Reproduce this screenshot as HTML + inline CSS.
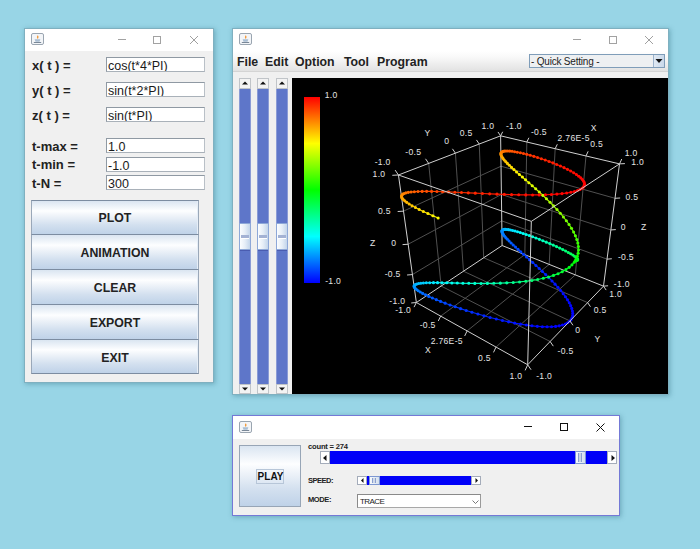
<!DOCTYPE html>
<html><head><meta charset="utf-8">
<style>
*{margin:0;padding:0;box-sizing:border-box}
html,body{width:700px;height:549px;overflow:hidden;background:#98d5e6;font-family:"Liberation Sans",sans-serif}
.abs{position:absolute}
.win{position:absolute;background:#f0f0f0;border:1px solid #7fb0c0;box-shadow:1px 1px 5px rgba(20,80,100,.35)}
.title{position:absolute;left:0;top:0;right:0;background:#fff}
.ico{position:absolute;width:12px;height:12px}
.lbl{position:absolute;font-weight:bold;font-size:13px;color:#222;white-space:nowrap;line-height:1}
.fld{position:absolute;background:#fff;border:1px solid #8f99a3;border-bottom-color:#a9b1b9;border-right-color:#b9c0c7;overflow:hidden}
.fld span{position:absolute;left:1px;font-size:12.5px;color:#1a1a1a;white-space:nowrap;line-height:1}
.btn{position:absolute;left:31px;width:168px;border:1px solid #7c8ca1;border-left-color:#9aa8b9;border-right-color:#9aa8b9;background:linear-gradient(#dae5f1 0%,#fdfeff 30%,#f1f5fa 42%,#d3e0ef 72%,#bfd2e8 100%);box-shadow:inset -1px 0 #e6eef7}
.btn span{position:absolute;left:0;right:0;text-align:center;font-weight:bold;font-size:12.3px;color:#222;line-height:1}
.ctl{position:absolute}
.sb{position:absolute;width:12px;background:#5e76c9}
.sbbtn{position:absolute;left:0;width:12px;height:10px;background:#f3f3f3;border:1px solid #c0c4c8}
.menu{position:absolute;top:56px;font-weight:bold;font-size:12.3px;color:#222;line-height:1}
svg text{font-family:"Liberation Sans",sans-serif;font-size:8.6px;letter-spacing:.3px;fill:#e4e4e4}
</style></head><body>

<!-- LEFT WINDOW -->
<div class="win" style="left:24px;top:28px;width:190px;height:355px">
  <div class="title" style="height:22px"></div>
</div>
<svg class="abs" style="left:31px;top:33px" width="13" height="12" viewBox="0 0 13 12">
  <rect x=".5" y=".5" width="12" height="11" rx="1.5" fill="#f3f5f8" stroke="#9aa5b0"/>
  <path d="M6.6 2.3c1.3 1 1.2 2.4.1 3.6c-1.1-.9-1-2.3-.1-3.6z" fill="#f39a3a"/>
  <path d="M3.6 6.3h5.8l-.9 2.4H4.5z" fill="#a9bdd2"/>
  <path d="M2.8 9.5h7.4" stroke="#7a8898" stroke-width="1"/>
</svg>
<div class="abs" style="left:118px;top:39px;width:8px;height:1px;background:#a2a2a2"></div>
<div class="abs" style="left:153px;top:36px;width:8px;height:8px;border:1px solid #a2a2a2"></div>
<svg class="abs" style="left:190px;top:36px" width="8" height="8" viewBox="0 0 8 8"><path d="M0 0L8 8M8 0L0 8" stroke="#a0a0a0" stroke-width="1"/></svg>

<div class="lbl" style="left:32px;top:58.5px">x( t ) =</div>
<div class="lbl" style="left:32px;top:84px">y( t ) =</div>
<div class="lbl" style="left:32px;top:109px">z( t ) =</div>
<div class="lbl" style="left:32px;top:140px">t-max =</div>
<div class="lbl" style="left:32px;top:158px">t-min =</div>
<div class="lbl" style="left:32px;top:176.5px">t-N =</div>

<div class="fld" style="left:106px;top:57px;width:99px;height:15px"><span style="top:2px">cos(t*4*PI)</span></div>
<div class="fld" style="left:106px;top:82px;width:99px;height:15px"><span style="top:2px">sin(t*2*PI)</span></div>
<div class="fld" style="left:106px;top:107px;width:99px;height:15px"><span style="top:2px">sin(t*PI)</span></div>
<div class="fld" style="left:106px;top:138px;width:99px;height:15px"><span style="top:1.5px">1.0</span></div>
<div class="fld" style="left:106px;top:157px;width:99px;height:15px"><span style="top:1.5px">-1.0</span></div>
<div class="fld" style="left:106px;top:175px;width:99px;height:15px"><span style="top:1.5px">300</span></div>

<div class="btn" style="top:200px;height:35px"><span style="top:11px">PLOT</span></div>
<div class="btn" style="top:234px;height:36px"><span style="top:12px">ANIMATION</span></div>
<div class="btn" style="top:269px;height:36px"><span style="top:12px">CLEAR</span></div>
<div class="btn" style="top:304px;height:36px"><span style="top:12px">EXPORT</span></div>
<div class="btn" style="top:339px;height:35px"><span style="top:12px">EXIT</span></div>

<!-- RIGHT WINDOW -->
<div class="win" style="left:232px;top:28px;width:437px;height:367px">
  <div class="title" style="height:22px"></div>
  <div class="abs" style="left:0;top:22px;right:0;height:20px;background:linear-gradient(#ffffff,#f9f9f9 30%,#e2e2e2)"></div>
  <div class="abs" style="left:0;top:42px;right:0;height:1px;background:#d4d4d4"></div>
  <div class="abs" style="left:59px;top:49px;width:376px;height:316px;background:#000"></div>
</div>
<svg class="abs" style="left:239px;top:33px" width="13" height="12" viewBox="0 0 13 12">
  <rect x=".5" y=".5" width="12" height="11" rx="1.5" fill="#f3f5f8" stroke="#9aa5b0"/>
  <path d="M6.6 2.3c1.3 1 1.2 2.4.1 3.6c-1.1-.9-1-2.3-.1-3.6z" fill="#f39a3a"/>
  <path d="M3.6 6.3h5.8l-.9 2.4H4.5z" fill="#a9bdd2"/>
  <path d="M2.8 9.5h7.4" stroke="#7a8898" stroke-width="1"/>
</svg>
<div class="abs" style="left:573px;top:39px;width:8px;height:1px;background:#a2a2a2"></div>
<div class="abs" style="left:609px;top:36px;width:8px;height:8px;border:1px solid #a2a2a2"></div>
<svg class="abs" style="left:645px;top:36px" width="8" height="8" viewBox="0 0 8 8"><path d="M0 0L8 8M8 0L0 8" stroke="#a0a0a0" stroke-width="1"/></svg>

<div class="menu" style="left:237px">File</div>
<div class="menu" style="left:265px">Edit</div>
<div class="menu" style="left:295px">Option</div>
<div class="menu" style="left:344px">Tool</div>
<div class="menu" style="left:377px">Program</div>

<div class="abs" style="left:529px;top:54px;width:136px;height:14px;background:#eef0f2;border:1px solid #7f9db9;overflow:hidden">
  <span class="abs" style="left:1px;top:2.2px;font-size:10px;letter-spacing:-.2px;color:#222;line-height:1;white-space:nowrap">- Quick Setting -</span>
  <div class="abs" style="left:123px;top:0;width:11px;height:12px;background:linear-gradient(90deg,#dfe8f2,#c9d8ea);border-left:1px solid #9db3cc"></div>
  <svg class="abs" style="left:125px;top:3px" width="8" height="6" viewBox="0 0 8 6"><path d="M.5 1h7L4 5z" fill="#111"/></svg>
</div>

<!-- scrollbars -->
<div class="abs" style="left:239px;top:78px;width:12px;height:316px;background:#5e76c9;border-left:1px solid #8a9bd6;border-right:1px solid #8a9bd6">
  <div class="sbbtn" style="left:-1px;top:0;height:11px"></div>
  <div class="sbbtn" style="left:-1px;top:306px;height:10px"></div>
  <svg class="abs" style="left:2px;top:3px" width="6" height="4" viewBox="0 0 6 4"><path d="M0 3.5L3 .5L6 3.5z" fill="#111"/></svg>
  <svg class="abs" style="left:2px;top:309px" width="6" height="4" viewBox="0 0 6 4"><path d="M0 .5L3 3.5L6 .5z" fill="#111"/></svg>
  <div class="abs" style="left:-1px;top:145px;width:12px;height:27px;border:1px solid #8ea8d8;background:linear-gradient(90deg,#fbfdff,#e6eef7 50%,#c3d5eb)"></div>
  <div class="abs" style="left:0px;top:172px;width:10px;height:1px;background:#4a5cb0"></div>
  <div class="abs" style="left:1px;top:156.5px;width:8px;height:3px;background:#a3b2d4"></div>
  <div class="abs" style="left:1px;top:159.5px;width:8px;height:1px;background:#fff"></div>
</div>
<div class="abs" style="left:257px;top:78px;width:12px;height:316px;background:#5e76c9;border-left:1px solid #8a9bd6;border-right:1px solid #8a9bd6">
  <div class="sbbtn" style="left:-1px;top:0;height:11px"></div>
  <div class="sbbtn" style="left:-1px;top:306px;height:10px"></div>
  <svg class="abs" style="left:2px;top:3px" width="6" height="4" viewBox="0 0 6 4"><path d="M0 3.5L3 .5L6 3.5z" fill="#111"/></svg>
  <svg class="abs" style="left:2px;top:309px" width="6" height="4" viewBox="0 0 6 4"><path d="M0 .5L3 3.5L6 .5z" fill="#111"/></svg>
  <div class="abs" style="left:-1px;top:145px;width:12px;height:27px;border:1px solid #8ea8d8;background:linear-gradient(90deg,#fbfdff,#e6eef7 50%,#c3d5eb)"></div>
  <div class="abs" style="left:0px;top:172px;width:10px;height:1px;background:#4a5cb0"></div>
  <div class="abs" style="left:1px;top:156.5px;width:8px;height:3px;background:#a3b2d4"></div>
  <div class="abs" style="left:1px;top:159.5px;width:8px;height:1px;background:#fff"></div>
</div>
<div class="abs" style="left:276px;top:78px;width:12px;height:316px;background:#5e76c9;border-left:1px solid #8a9bd6;border-right:1px solid #8a9bd6">
  <div class="sbbtn" style="left:-1px;top:0;height:11px"></div>
  <div class="sbbtn" style="left:-1px;top:306px;height:10px"></div>
  <svg class="abs" style="left:2px;top:3px" width="6" height="4" viewBox="0 0 6 4"><path d="M0 3.5L3 .5L6 3.5z" fill="#111"/></svg>
  <svg class="abs" style="left:2px;top:309px" width="6" height="4" viewBox="0 0 6 4"><path d="M0 .5L3 3.5L6 .5z" fill="#111"/></svg>
  <div class="abs" style="left:-1px;top:145px;width:12px;height:27px;border:1px solid #8ea8d8;background:linear-gradient(90deg,#fbfdff,#e6eef7 50%,#c3d5eb)"></div>
  <div class="abs" style="left:0px;top:172px;width:10px;height:1px;background:#4a5cb0"></div>
  <div class="abs" style="left:1px;top:156.5px;width:8px;height:3px;background:#a3b2d4"></div>
  <div class="abs" style="left:1px;top:159.5px;width:8px;height:1px;background:#fff"></div>
</div>
<!-- 3D canvas -->
<svg class="abs" style="left:292px;top:78px" width="376" height="316" viewBox="0 0 376 316">
  <defs><linearGradient id="cb" x1="0" y1="0" x2="0" y2="1"><stop offset="0.0000" stop-color="#ff0000"/><stop offset="0.0833" stop-color="#ff5500"/><stop offset="0.1667" stop-color="#ffaa00"/><stop offset="0.2500" stop-color="#ffff00"/><stop offset="0.3333" stop-color="#aaff00"/><stop offset="0.4167" stop-color="#55ff00"/><stop offset="0.5000" stop-color="#00ff00"/><stop offset="0.5833" stop-color="#00ff55"/><stop offset="0.6667" stop-color="#00ffaa"/><stop offset="0.7500" stop-color="#00ffff"/><stop offset="0.8333" stop-color="#00aaff"/><stop offset="0.9167" stop-color="#0055ff"/><stop offset="1.0000" stop-color="#0000ff"/></linearGradient></defs>
  <rect x="12" y="19" width="16" height="186" fill="url(#cb)"/>
<line x1="149.13" y1="208.06" x2="136.67" y2="85.41" stroke="#505050" stroke-width="1.0"/>
<line x1="120.43" y1="196.57" x2="209.77" y2="142.86" stroke="#505050" stroke-width="1.0"/>
<line x1="171.46" y1="193.22" x2="163.41" y2="75.16" stroke="#505050" stroke-width="1.0"/>
<line x1="116.17" y1="166.22" x2="209.41" y2="116.48" stroke="#505050" stroke-width="1.0"/>
<line x1="191.69" y1="179.77" x2="187.25" y2="66.03" stroke="#505050" stroke-width="1.0"/>
<line x1="111.53" y1="133.15" x2="209.03" y2="88.21" stroke="#505050" stroke-width="1.0"/>
<line x1="232.84" y1="176.65" x2="234.82" y2="64.02" stroke="#505050" stroke-width="1.0"/>
<line x1="209.77" y1="142.86" x2="315.03" y2="181.15" stroke="#505050" stroke-width="1.0"/>
<line x1="257.19" y1="186.41" x2="263.17" y2="70.70" stroke="#505050" stroke-width="1.0"/>
<line x1="209.41" y1="116.48" x2="318.86" y2="151.95" stroke="#505050" stroke-width="1.0"/>
<line x1="283.34" y1="196.89" x2="293.97" y2="77.97" stroke="#505050" stroke-width="1.0"/>
<line x1="209.03" y1="88.21" x2="323.01" y2="120.31" stroke="#505050" stroke-width="1.0"/>
<line x1="148.67" y1="238.13" x2="232.84" y2="176.65" stroke="#505050" stroke-width="1.0"/>
<line x1="149.13" y1="208.06" x2="258.13" y2="263.51" stroke="#505050" stroke-width="1.0"/>
<line x1="175.13" y1="252.92" x2="257.19" y2="186.41" stroke="#505050" stroke-width="1.0"/>
<line x1="171.46" y1="193.22" x2="277.97" y2="242.93" stroke="#505050" stroke-width="1.0"/>
<line x1="204.02" y1="269.07" x2="283.34" y2="196.89" stroke="#505050" stroke-width="1.0"/>
<line x1="191.69" y1="179.77" x2="295.64" y2="224.60" stroke="#505050" stroke-width="1.0"/>
<line x1="124.36" y1="224.53" x2="210.10" y2="167.53" stroke="#cfcfcf" stroke-width="1.0"/>
<line x1="210.10" y1="167.53" x2="311.49" y2="208.17" stroke="#cfcfcf" stroke-width="1.0"/>
<line x1="210.10" y1="167.53" x2="208.62" y2="57.84" stroke="#cfcfcf" stroke-width="1.0"/>
<line x1="106.45" y1="96.99" x2="208.62" y2="57.84" stroke="#cfcfcf" stroke-width="1.0"/>
<line x1="208.62" y1="57.84" x2="327.53" y2="85.88" stroke="#cfcfcf" stroke-width="1.0"/>
<line x1="106.45" y1="96.99" x2="124.36" y2="224.53" stroke="#cfcfcf" stroke-width="1.0"/>
<line x1="327.53" y1="85.88" x2="311.49" y2="208.17" stroke="#cfcfcf" stroke-width="1.0"/>
<line x1="283.23" y1="182.79" x2="284.54" y2="182.62" stroke="#00ff05" stroke-width="1.15"/>
<line x1="284.54" y1="182.62" x2="285.36" y2="182.27" stroke="#00ff10" stroke-width="1.15"/>
<line x1="285.36" y1="182.27" x2="285.69" y2="181.75" stroke="#00ff1b" stroke-width="1.15"/>
<line x1="285.69" y1="181.75" x2="285.55" y2="181.08" stroke="#00ff25" stroke-width="1.15"/>
<line x1="285.55" y1="181.08" x2="284.96" y2="180.26" stroke="#00ff30" stroke-width="1.15"/>
<line x1="284.96" y1="180.26" x2="283.95" y2="179.31" stroke="#00ff3b" stroke-width="1.15"/>
<line x1="283.95" y1="179.31" x2="282.55" y2="178.24" stroke="#00ff45" stroke-width="1.15"/>
<line x1="282.55" y1="178.24" x2="280.79" y2="177.06" stroke="#00ff50" stroke-width="1.15"/>
<line x1="280.79" y1="177.06" x2="278.69" y2="175.79" stroke="#00ff5b" stroke-width="1.15"/>
<line x1="278.69" y1="175.79" x2="276.30" y2="174.45" stroke="#00ff65" stroke-width="1.15"/>
<line x1="276.30" y1="174.45" x2="273.65" y2="173.04" stroke="#00ff70" stroke-width="1.15"/>
<line x1="273.65" y1="173.04" x2="270.78" y2="171.59" stroke="#00ff7a" stroke-width="1.15"/>
<line x1="270.78" y1="171.59" x2="267.72" y2="170.11" stroke="#00ff84" stroke-width="1.15"/>
<line x1="267.72" y1="170.11" x2="264.51" y2="168.61" stroke="#00ff8f" stroke-width="1.15"/>
<line x1="264.51" y1="168.61" x2="261.19" y2="167.11" stroke="#00ff99" stroke-width="1.15"/>
<line x1="261.19" y1="167.11" x2="257.78" y2="165.62" stroke="#00ffa3" stroke-width="1.15"/>
<line x1="257.78" y1="165.62" x2="254.32" y2="164.15" stroke="#00ffad" stroke-width="1.15"/>
<line x1="254.32" y1="164.15" x2="250.84" y2="162.72" stroke="#00ffb7" stroke-width="1.15"/>
<line x1="250.84" y1="162.72" x2="247.38" y2="161.33" stroke="#00ffc1" stroke-width="1.15"/>
<line x1="247.38" y1="161.33" x2="243.95" y2="160.00" stroke="#00ffcb" stroke-width="1.15"/>
<line x1="243.95" y1="160.00" x2="240.59" y2="158.74" stroke="#00ffd5" stroke-width="1.15"/>
<line x1="240.59" y1="158.74" x2="237.31" y2="157.55" stroke="#00ffdf" stroke-width="1.15"/>
<line x1="237.31" y1="157.55" x2="234.15" y2="156.45" stroke="#00ffe8" stroke-width="1.15"/>
<line x1="234.15" y1="156.45" x2="231.12" y2="155.44" stroke="#00fff2" stroke-width="1.15"/>
<line x1="231.12" y1="155.44" x2="228.24" y2="154.53" stroke="#00fffb" stroke-width="1.15"/>
<line x1="228.24" y1="154.53" x2="225.53" y2="153.72" stroke="#00faff" stroke-width="1.15"/>
<line x1="225.53" y1="153.72" x2="223.00" y2="153.02" stroke="#00f0ff" stroke-width="1.15"/>
<line x1="223.00" y1="153.02" x2="220.66" y2="152.44" stroke="#00e7ff" stroke-width="1.15"/>
<line x1="220.66" y1="152.44" x2="218.53" y2="151.97" stroke="#00dfff" stroke-width="1.15"/>
<line x1="218.53" y1="151.97" x2="216.62" y2="151.64" stroke="#00d6ff" stroke-width="1.15"/>
<line x1="216.62" y1="151.64" x2="214.94" y2="151.43" stroke="#00cdff" stroke-width="1.15"/>
<line x1="214.94" y1="151.43" x2="213.49" y2="151.35" stroke="#00c5ff" stroke-width="1.15"/>
<line x1="213.49" y1="151.35" x2="212.28" y2="151.40" stroke="#00bcff" stroke-width="1.15"/>
<line x1="212.28" y1="151.40" x2="211.31" y2="151.60" stroke="#00b4ff" stroke-width="1.15"/>
<line x1="211.31" y1="151.60" x2="210.60" y2="151.93" stroke="#00acff" stroke-width="1.15"/>
<line x1="210.60" y1="151.93" x2="210.13" y2="152.40" stroke="#00a4ff" stroke-width="1.15"/>
<line x1="210.13" y1="152.40" x2="209.92" y2="153.01" stroke="#009cff" stroke-width="1.15"/>
<line x1="209.92" y1="153.01" x2="209.96" y2="153.76" stroke="#0094ff" stroke-width="1.15"/>
<line x1="209.96" y1="153.76" x2="210.25" y2="154.66" stroke="#008dff" stroke-width="1.15"/>
<line x1="210.25" y1="154.66" x2="210.80" y2="155.71" stroke="#0086ff" stroke-width="1.15"/>
<line x1="210.80" y1="155.71" x2="211.59" y2="156.89" stroke="#007fff" stroke-width="1.15"/>
<line x1="211.59" y1="156.89" x2="212.62" y2="158.22" stroke="#0078ff" stroke-width="1.15"/>
<line x1="212.62" y1="158.22" x2="213.89" y2="159.69" stroke="#0071ff" stroke-width="1.15"/>
<line x1="213.89" y1="159.69" x2="215.40" y2="161.30" stroke="#006aff" stroke-width="1.15"/>
<line x1="215.40" y1="161.30" x2="217.12" y2="163.05" stroke="#0064ff" stroke-width="1.15"/>
<line x1="217.12" y1="163.05" x2="219.06" y2="164.94" stroke="#005dff" stroke-width="1.15"/>
<line x1="219.06" y1="164.94" x2="221.20" y2="166.97" stroke="#0057ff" stroke-width="1.15"/>
<line x1="221.20" y1="166.97" x2="223.54" y2="169.12" stroke="#0051ff" stroke-width="1.15"/>
<line x1="223.54" y1="169.12" x2="226.05" y2="171.40" stroke="#004cff" stroke-width="1.15"/>
<line x1="226.05" y1="171.40" x2="228.72" y2="173.80" stroke="#0046ff" stroke-width="1.15"/>
<line x1="228.72" y1="173.80" x2="231.54" y2="176.32" stroke="#0041ff" stroke-width="1.15"/>
<line x1="231.54" y1="176.32" x2="234.49" y2="178.95" stroke="#003cff" stroke-width="1.15"/>
<line x1="234.49" y1="178.95" x2="237.55" y2="181.69" stroke="#0037ff" stroke-width="1.15"/>
<line x1="237.55" y1="181.69" x2="240.69" y2="184.52" stroke="#0032ff" stroke-width="1.15"/>
<line x1="240.69" y1="184.52" x2="243.90" y2="187.44" stroke="#002eff" stroke-width="1.15"/>
<line x1="243.90" y1="187.44" x2="247.15" y2="190.43" stroke="#0029ff" stroke-width="1.15"/>
<line x1="247.15" y1="190.43" x2="250.41" y2="193.49" stroke="#0025ff" stroke-width="1.15"/>
<line x1="250.41" y1="193.49" x2="253.66" y2="196.61" stroke="#0021ff" stroke-width="1.15"/>
<line x1="253.66" y1="196.61" x2="256.87" y2="199.77" stroke="#001dff" stroke-width="1.15"/>
<line x1="256.87" y1="199.77" x2="260.01" y2="202.96" stroke="#001aff" stroke-width="1.15"/>
<line x1="260.01" y1="202.96" x2="263.04" y2="206.16" stroke="#0017ff" stroke-width="1.15"/>
<line x1="263.04" y1="206.16" x2="265.94" y2="209.37" stroke="#0014ff" stroke-width="1.15"/>
<line x1="265.94" y1="209.37" x2="268.67" y2="212.56" stroke="#0011ff" stroke-width="1.15"/>
<line x1="268.67" y1="212.56" x2="271.20" y2="215.71" stroke="#000eff" stroke-width="1.15"/>
<line x1="271.20" y1="215.71" x2="273.50" y2="218.81" stroke="#000cff" stroke-width="1.15"/>
<line x1="273.50" y1="218.81" x2="275.53" y2="221.85" stroke="#000aff" stroke-width="1.15"/>
<line x1="275.53" y1="221.85" x2="277.27" y2="224.80" stroke="#0008ff" stroke-width="1.15"/>
<line x1="277.27" y1="224.80" x2="278.68" y2="227.65" stroke="#0006ff" stroke-width="1.15"/>
<line x1="278.68" y1="227.65" x2="279.75" y2="230.38" stroke="#0004ff" stroke-width="1.15"/>
<line x1="279.75" y1="230.38" x2="280.43" y2="232.97" stroke="#0003ff" stroke-width="1.15"/>
<line x1="280.43" y1="232.97" x2="280.72" y2="235.41" stroke="#0002ff" stroke-width="1.15"/>
<line x1="280.72" y1="235.41" x2="280.59" y2="237.68" stroke="#0001ff" stroke-width="1.15"/>
<line x1="280.59" y1="237.68" x2="280.03" y2="239.76" stroke="#0001ff" stroke-width="1.15"/>
<line x1="280.03" y1="239.76" x2="279.02" y2="241.65" stroke="#0000ff" stroke-width="1.15"/>
<line x1="279.02" y1="241.65" x2="277.56" y2="243.33" stroke="#0000ff" stroke-width="1.15"/>
<line x1="277.56" y1="243.33" x2="275.65" y2="244.80" stroke="#0000ff" stroke-width="1.15"/>
<line x1="275.65" y1="244.80" x2="273.29" y2="246.04" stroke="#0000ff" stroke-width="1.15"/>
<line x1="273.29" y1="246.04" x2="270.48" y2="247.06" stroke="#0001ff" stroke-width="1.15"/>
<line x1="270.48" y1="247.06" x2="267.24" y2="247.84" stroke="#0002ff" stroke-width="1.15"/>
<line x1="267.24" y1="247.84" x2="263.59" y2="248.39" stroke="#0003ff" stroke-width="1.15"/>
<line x1="263.59" y1="248.39" x2="259.54" y2="248.72" stroke="#0004ff" stroke-width="1.15"/>
<line x1="259.54" y1="248.72" x2="255.12" y2="248.81" stroke="#0005ff" stroke-width="1.15"/>
<line x1="255.12" y1="248.81" x2="250.36" y2="248.69" stroke="#0007ff" stroke-width="1.15"/>
<line x1="250.36" y1="248.69" x2="245.29" y2="248.35" stroke="#0009ff" stroke-width="1.15"/>
<line x1="245.29" y1="248.35" x2="239.95" y2="247.81" stroke="#000bff" stroke-width="1.15"/>
<line x1="239.95" y1="247.81" x2="234.37" y2="247.07" stroke="#000dff" stroke-width="1.15"/>
<line x1="234.37" y1="247.07" x2="228.59" y2="246.16" stroke="#000fff" stroke-width="1.15"/>
<line x1="228.59" y1="246.16" x2="222.65" y2="245.09" stroke="#0012ff" stroke-width="1.15"/>
<line x1="222.65" y1="245.09" x2="216.59" y2="243.86" stroke="#0015ff" stroke-width="1.15"/>
<line x1="216.59" y1="243.86" x2="210.45" y2="242.50" stroke="#0018ff" stroke-width="1.15"/>
<line x1="210.45" y1="242.50" x2="204.28" y2="241.03" stroke="#001cff" stroke-width="1.15"/>
<line x1="204.28" y1="241.03" x2="198.10" y2="239.45" stroke="#001fff" stroke-width="1.15"/>
<line x1="198.10" y1="239.45" x2="191.97" y2="237.79" stroke="#0023ff" stroke-width="1.15"/>
<line x1="191.97" y1="237.79" x2="185.93" y2="236.07" stroke="#0027ff" stroke-width="1.15"/>
<line x1="185.93" y1="236.07" x2="179.99" y2="234.29" stroke="#002bff" stroke-width="1.15"/>
<line x1="179.99" y1="234.29" x2="174.21" y2="232.48" stroke="#0030ff" stroke-width="1.15"/>
<line x1="174.21" y1="232.48" x2="168.61" y2="230.65" stroke="#0034ff" stroke-width="1.15"/>
<line x1="168.61" y1="230.65" x2="163.22" y2="228.81" stroke="#0039ff" stroke-width="1.15"/>
<line x1="163.22" y1="228.81" x2="158.07" y2="226.98" stroke="#003eff" stroke-width="1.15"/>
<line x1="158.07" y1="226.98" x2="153.19" y2="225.17" stroke="#0043ff" stroke-width="1.15"/>
<line x1="153.19" y1="225.17" x2="148.60" y2="223.40" stroke="#0049ff" stroke-width="1.15"/>
<line x1="148.60" y1="223.40" x2="144.33" y2="221.67" stroke="#004fff" stroke-width="1.15"/>
<line x1="144.33" y1="221.67" x2="140.38" y2="220.00" stroke="#0054ff" stroke-width="1.15"/>
<line x1="140.38" y1="220.00" x2="136.79" y2="218.39" stroke="#005aff" stroke-width="1.15"/>
<line x1="136.79" y1="218.39" x2="133.56" y2="216.85" stroke="#0060ff" stroke-width="1.15"/>
<line x1="133.56" y1="216.85" x2="130.71" y2="215.39" stroke="#0067ff" stroke-width="1.15"/>
<line x1="130.71" y1="215.39" x2="128.25" y2="214.01" stroke="#006dff" stroke-width="1.15"/>
<line x1="128.25" y1="214.01" x2="126.19" y2="212.72" stroke="#0074ff" stroke-width="1.15"/>
<line x1="126.19" y1="212.72" x2="124.54" y2="211.53" stroke="#007bff" stroke-width="1.15"/>
<line x1="124.54" y1="211.53" x2="123.31" y2="210.43" stroke="#0082ff" stroke-width="1.15"/>
<line x1="123.31" y1="210.43" x2="122.50" y2="209.43" stroke="#0089ff" stroke-width="1.15"/>
<line x1="122.50" y1="209.43" x2="122.11" y2="208.53" stroke="#0091ff" stroke-width="1.15"/>
<line x1="122.11" y1="208.53" x2="122.16" y2="207.74" stroke="#0098ff" stroke-width="1.15"/>
<line x1="122.16" y1="207.74" x2="122.63" y2="207.04" stroke="#00a0ff" stroke-width="1.15"/>
<line x1="122.63" y1="207.04" x2="123.53" y2="206.43" stroke="#00a8ff" stroke-width="1.15"/>
<line x1="123.53" y1="206.43" x2="124.86" y2="205.93" stroke="#00b0ff" stroke-width="1.15"/>
<line x1="124.86" y1="205.93" x2="126.61" y2="205.51" stroke="#00b8ff" stroke-width="1.15"/>
<line x1="126.61" y1="205.51" x2="128.77" y2="205.19" stroke="#00c0ff" stroke-width="1.15"/>
<line x1="128.77" y1="205.19" x2="131.35" y2="204.94" stroke="#00c9ff" stroke-width="1.15"/>
<line x1="131.35" y1="204.94" x2="134.33" y2="204.78" stroke="#00d1ff" stroke-width="1.15"/>
<line x1="134.33" y1="204.78" x2="137.70" y2="204.68" stroke="#00daff" stroke-width="1.15"/>
<line x1="137.70" y1="204.68" x2="141.45" y2="204.65" stroke="#00e3ff" stroke-width="1.15"/>
<line x1="141.45" y1="204.65" x2="145.56" y2="204.66" stroke="#00ecff" stroke-width="1.15"/>
<line x1="145.56" y1="204.66" x2="150.02" y2="204.73" stroke="#00f5ff" stroke-width="1.15"/>
<line x1="150.02" y1="204.73" x2="154.81" y2="204.82" stroke="#00feff" stroke-width="1.15"/>
<line x1="154.81" y1="204.82" x2="159.90" y2="204.94" stroke="#00fff6" stroke-width="1.15"/>
<line x1="159.90" y1="204.94" x2="165.28" y2="205.07" stroke="#00ffed" stroke-width="1.15"/>
<line x1="165.28" y1="205.07" x2="170.91" y2="205.20" stroke="#00ffe3" stroke-width="1.15"/>
<line x1="170.91" y1="205.20" x2="176.77" y2="205.31" stroke="#00ffda" stroke-width="1.15"/>
<line x1="176.77" y1="205.31" x2="182.82" y2="205.39" stroke="#00ffd0" stroke-width="1.15"/>
<line x1="182.82" y1="205.39" x2="189.04" y2="205.43" stroke="#00ffc6" stroke-width="1.15"/>
<line x1="189.04" y1="205.43" x2="195.38" y2="205.41" stroke="#00ffbc" stroke-width="1.15"/>
<line x1="195.38" y1="205.41" x2="201.81" y2="205.32" stroke="#00ffb2" stroke-width="1.15"/>
<line x1="201.81" y1="205.32" x2="208.29" y2="205.14" stroke="#00ffa8" stroke-width="1.15"/>
<line x1="208.29" y1="205.14" x2="214.77" y2="204.86" stroke="#00ff9e" stroke-width="1.15"/>
<line x1="214.77" y1="204.86" x2="221.21" y2="204.46" stroke="#00ff94" stroke-width="1.15"/>
<line x1="221.21" y1="204.46" x2="227.57" y2="203.94" stroke="#00ff8a" stroke-width="1.15"/>
<line x1="227.57" y1="203.94" x2="233.80" y2="203.26" stroke="#00ff7f" stroke-width="1.15"/>
<line x1="233.80" y1="203.26" x2="239.85" y2="202.44" stroke="#00ff75" stroke-width="1.15"/>
<line x1="239.85" y1="202.44" x2="245.69" y2="201.45" stroke="#00ff6a" stroke-width="1.15"/>
<line x1="245.69" y1="201.45" x2="251.27" y2="200.28" stroke="#00ff60" stroke-width="1.15"/>
<line x1="251.27" y1="200.28" x2="256.54" y2="198.94" stroke="#00ff55" stroke-width="1.15"/>
<line x1="256.54" y1="198.94" x2="261.48" y2="197.40" stroke="#00ff4b" stroke-width="1.15"/>
<line x1="261.48" y1="197.40" x2="266.04" y2="195.68" stroke="#00ff40" stroke-width="1.15"/>
<line x1="266.04" y1="195.68" x2="270.19" y2="193.76" stroke="#00ff35" stroke-width="1.15"/>
<line x1="270.19" y1="193.76" x2="273.91" y2="191.64" stroke="#00ff2b" stroke-width="1.15"/>
<line x1="273.91" y1="191.64" x2="277.18" y2="189.34" stroke="#00ff20" stroke-width="1.15"/>
<line x1="277.18" y1="189.34" x2="279.96" y2="186.85" stroke="#00ff15" stroke-width="1.15"/>
<line x1="279.96" y1="186.85" x2="282.27" y2="184.19" stroke="#00ff0b" stroke-width="1.15"/>
<line x1="282.27" y1="184.19" x2="284.07" y2="181.35" stroke="#00ff00" stroke-width="1.15"/>
<line x1="284.07" y1="181.35" x2="285.38" y2="178.35" stroke="#0bff00" stroke-width="1.15"/>
<line x1="285.38" y1="178.35" x2="286.20" y2="175.21" stroke="#15ff00" stroke-width="1.15"/>
<line x1="286.20" y1="175.21" x2="286.54" y2="171.93" stroke="#20ff00" stroke-width="1.15"/>
<line x1="286.54" y1="171.93" x2="286.40" y2="168.53" stroke="#2bff00" stroke-width="1.15"/>
<line x1="286.40" y1="168.53" x2="285.82" y2="165.03" stroke="#35ff00" stroke-width="1.15"/>
<line x1="285.82" y1="165.03" x2="284.81" y2="161.43" stroke="#40ff00" stroke-width="1.15"/>
<line x1="284.81" y1="161.43" x2="283.40" y2="157.77" stroke="#4bff00" stroke-width="1.15"/>
<line x1="283.40" y1="157.77" x2="281.61" y2="154.06" stroke="#55ff00" stroke-width="1.15"/>
<line x1="281.61" y1="154.06" x2="279.49" y2="150.30" stroke="#60ff00" stroke-width="1.15"/>
<line x1="279.49" y1="150.30" x2="277.05" y2="146.53" stroke="#6aff00" stroke-width="1.15"/>
<line x1="277.05" y1="146.53" x2="274.35" y2="142.75" stroke="#75ff00" stroke-width="1.15"/>
<line x1="274.35" y1="142.75" x2="271.41" y2="138.98" stroke="#7fff00" stroke-width="1.15"/>
<line x1="271.41" y1="138.98" x2="268.27" y2="135.23" stroke="#8aff00" stroke-width="1.15"/>
<line x1="268.27" y1="135.23" x2="264.97" y2="131.53" stroke="#94ff00" stroke-width="1.15"/>
<line x1="264.97" y1="131.53" x2="261.55" y2="127.88" stroke="#9eff00" stroke-width="1.15"/>
<line x1="261.55" y1="127.88" x2="258.03" y2="124.29" stroke="#a8ff00" stroke-width="1.15"/>
<line x1="258.03" y1="124.29" x2="254.45" y2="120.78" stroke="#b2ff00" stroke-width="1.15"/>
<line x1="254.45" y1="120.78" x2="250.85" y2="117.36" stroke="#bcff00" stroke-width="1.15"/>
<line x1="250.85" y1="117.36" x2="247.26" y2="114.03" stroke="#c6ff00" stroke-width="1.15"/>
<line x1="247.26" y1="114.03" x2="243.71" y2="110.81" stroke="#d0ff00" stroke-width="1.15"/>
<line x1="243.71" y1="110.81" x2="240.22" y2="107.69" stroke="#daff00" stroke-width="1.15"/>
<line x1="240.22" y1="107.69" x2="236.82" y2="104.69" stroke="#e3ff00" stroke-width="1.15"/>
<line x1="236.82" y1="104.69" x2="233.53" y2="101.81" stroke="#edff00" stroke-width="1.15"/>
<line x1="233.53" y1="101.81" x2="230.38" y2="99.06" stroke="#f6ff00" stroke-width="1.15"/>
<line x1="230.38" y1="99.06" x2="227.39" y2="96.44" stroke="#fffe00" stroke-width="1.15"/>
<line x1="227.39" y1="96.44" x2="224.57" y2="93.95" stroke="#fff500" stroke-width="1.15"/>
<line x1="224.57" y1="93.95" x2="221.95" y2="91.60" stroke="#ffec00" stroke-width="1.15"/>
<line x1="221.95" y1="91.60" x2="219.53" y2="89.39" stroke="#ffe300" stroke-width="1.15"/>
<line x1="219.53" y1="89.39" x2="217.34" y2="87.31" stroke="#ffda00" stroke-width="1.15"/>
<line x1="217.34" y1="87.31" x2="215.38" y2="85.38" stroke="#ffd100" stroke-width="1.15"/>
<line x1="215.38" y1="85.38" x2="213.66" y2="83.58" stroke="#ffc900" stroke-width="1.15"/>
<line x1="213.66" y1="83.58" x2="212.19" y2="81.93" stroke="#ffc000" stroke-width="1.15"/>
<line x1="212.19" y1="81.93" x2="210.99" y2="80.42" stroke="#ffb800" stroke-width="1.15"/>
<line x1="210.99" y1="80.42" x2="210.05" y2="79.05" stroke="#ffb000" stroke-width="1.15"/>
<line x1="210.05" y1="79.05" x2="209.38" y2="77.82" stroke="#ffa800" stroke-width="1.15"/>
<line x1="209.38" y1="77.82" x2="208.98" y2="76.73" stroke="#ffa000" stroke-width="1.15"/>
<line x1="208.98" y1="76.73" x2="208.87" y2="75.79" stroke="#ff9800" stroke-width="1.15"/>
<line x1="208.87" y1="75.79" x2="209.03" y2="74.98" stroke="#ff9100" stroke-width="1.15"/>
<line x1="209.03" y1="74.98" x2="209.47" y2="74.30" stroke="#ff8900" stroke-width="1.15"/>
<line x1="209.47" y1="74.30" x2="210.19" y2="73.77" stroke="#ff8200" stroke-width="1.15"/>
<line x1="210.19" y1="73.77" x2="211.18" y2="73.36" stroke="#ff7b00" stroke-width="1.15"/>
<line x1="211.18" y1="73.36" x2="212.45" y2="73.10" stroke="#ff7400" stroke-width="1.15"/>
<line x1="212.45" y1="73.10" x2="213.99" y2="72.96" stroke="#ff6d00" stroke-width="1.15"/>
<line x1="213.99" y1="72.96" x2="215.78" y2="72.95" stroke="#ff6700" stroke-width="1.15"/>
<line x1="215.78" y1="72.95" x2="217.83" y2="73.08" stroke="#ff6000" stroke-width="1.15"/>
<line x1="217.83" y1="73.08" x2="220.12" y2="73.32" stroke="#ff5a00" stroke-width="1.15"/>
<line x1="220.12" y1="73.32" x2="222.65" y2="73.69" stroke="#ff5400" stroke-width="1.15"/>
<line x1="222.65" y1="73.69" x2="225.39" y2="74.19" stroke="#ff4f00" stroke-width="1.15"/>
<line x1="225.39" y1="74.19" x2="228.35" y2="74.80" stroke="#ff4900" stroke-width="1.15"/>
<line x1="228.35" y1="74.80" x2="231.49" y2="75.52" stroke="#ff4300" stroke-width="1.15"/>
<line x1="231.49" y1="75.52" x2="234.81" y2="76.35" stroke="#ff3e00" stroke-width="1.15"/>
<line x1="234.81" y1="76.35" x2="238.28" y2="77.30" stroke="#ff3900" stroke-width="1.15"/>
<line x1="238.28" y1="77.30" x2="241.88" y2="78.34" stroke="#ff3400" stroke-width="1.15"/>
<line x1="241.88" y1="78.34" x2="245.59" y2="79.48" stroke="#ff3000" stroke-width="1.15"/>
<line x1="245.59" y1="79.48" x2="249.37" y2="80.72" stroke="#ff2b00" stroke-width="1.15"/>
<line x1="249.37" y1="80.72" x2="253.21" y2="82.04" stroke="#ff2700" stroke-width="1.15"/>
<line x1="253.21" y1="82.04" x2="257.07" y2="83.44" stroke="#ff2300" stroke-width="1.15"/>
<line x1="257.07" y1="83.44" x2="260.92" y2="84.91" stroke="#ff1f00" stroke-width="1.15"/>
<line x1="260.92" y1="84.91" x2="264.72" y2="86.44" stroke="#ff1c00" stroke-width="1.15"/>
<line x1="264.72" y1="86.44" x2="268.44" y2="88.04" stroke="#ff1800" stroke-width="1.15"/>
<line x1="268.44" y1="88.04" x2="272.04" y2="89.67" stroke="#ff1500" stroke-width="1.15"/>
<line x1="272.04" y1="89.67" x2="275.47" y2="91.35" stroke="#ff1200" stroke-width="1.15"/>
<line x1="275.47" y1="91.35" x2="278.71" y2="93.05" stroke="#ff0f00" stroke-width="1.15"/>
<line x1="278.71" y1="93.05" x2="281.70" y2="94.77" stroke="#ff0d00" stroke-width="1.15"/>
<line x1="281.70" y1="94.77" x2="284.40" y2="96.50" stroke="#ff0b00" stroke-width="1.15"/>
<line x1="284.40" y1="96.50" x2="286.79" y2="98.21" stroke="#ff0900" stroke-width="1.15"/>
<line x1="286.79" y1="98.21" x2="288.80" y2="99.91" stroke="#ff0700" stroke-width="1.15"/>
<line x1="288.80" y1="99.91" x2="290.42" y2="101.58" stroke="#ff0500" stroke-width="1.15"/>
<line x1="290.42" y1="101.58" x2="291.60" y2="103.21" stroke="#ff0400" stroke-width="1.15"/>
<line x1="291.60" y1="103.21" x2="292.31" y2="104.78" stroke="#ff0300" stroke-width="1.15"/>
<line x1="292.31" y1="104.78" x2="292.53" y2="106.29" stroke="#ff0200" stroke-width="1.15"/>
<line x1="292.53" y1="106.29" x2="292.22" y2="107.73" stroke="#ff0100" stroke-width="1.15"/>
<line x1="292.22" y1="107.73" x2="291.38" y2="109.08" stroke="#ff0000" stroke-width="1.15"/>
<line x1="291.38" y1="109.08" x2="289.98" y2="110.34" stroke="#ff0000" stroke-width="1.15"/>
<line x1="289.98" y1="110.34" x2="288.02" y2="111.50" stroke="#ff0000" stroke-width="1.15"/>
<line x1="288.02" y1="111.50" x2="285.50" y2="112.55" stroke="#ff0000" stroke-width="1.15"/>
<line x1="285.50" y1="112.55" x2="282.43" y2="113.49" stroke="#ff0100" stroke-width="1.15"/>
<line x1="282.43" y1="113.49" x2="278.81" y2="114.32" stroke="#ff0100" stroke-width="1.15"/>
<line x1="278.81" y1="114.32" x2="274.67" y2="115.03" stroke="#ff0200" stroke-width="1.15"/>
<line x1="274.67" y1="115.03" x2="270.03" y2="115.62" stroke="#ff0300" stroke-width="1.15"/>
<line x1="270.03" y1="115.62" x2="264.93" y2="116.10" stroke="#ff0400" stroke-width="1.15"/>
<line x1="264.93" y1="116.10" x2="259.39" y2="116.46" stroke="#ff0600" stroke-width="1.15"/>
<line x1="259.39" y1="116.46" x2="253.45" y2="116.72" stroke="#ff0800" stroke-width="1.15"/>
<line x1="253.45" y1="116.72" x2="247.17" y2="116.88" stroke="#ff0a00" stroke-width="1.15"/>
<line x1="247.17" y1="116.88" x2="240.59" y2="116.94" stroke="#ff0c00" stroke-width="1.15"/>
<line x1="240.59" y1="116.94" x2="233.76" y2="116.91" stroke="#ff0e00" stroke-width="1.15"/>
<line x1="233.76" y1="116.91" x2="226.73" y2="116.81" stroke="#ff1100" stroke-width="1.15"/>
<line x1="226.73" y1="116.81" x2="219.56" y2="116.64" stroke="#ff1400" stroke-width="1.15"/>
<line x1="219.56" y1="116.64" x2="212.29" y2="116.41" stroke="#ff1700" stroke-width="1.15"/>
<line x1="212.29" y1="116.41" x2="204.97" y2="116.14" stroke="#ff1a00" stroke-width="1.15"/>
<line x1="204.97" y1="116.14" x2="197.67" y2="115.83" stroke="#ff1d00" stroke-width="1.15"/>
<line x1="197.67" y1="115.83" x2="190.42" y2="115.51" stroke="#ff2100" stroke-width="1.15"/>
<line x1="190.42" y1="115.51" x2="183.28" y2="115.17" stroke="#ff2500" stroke-width="1.15"/>
<line x1="183.28" y1="115.17" x2="176.29" y2="114.83" stroke="#ff2900" stroke-width="1.15"/>
<line x1="176.29" y1="114.83" x2="169.49" y2="114.50" stroke="#ff2e00" stroke-width="1.15"/>
<line x1="169.49" y1="114.50" x2="162.92" y2="114.20" stroke="#ff3200" stroke-width="1.15"/>
<line x1="162.92" y1="114.20" x2="156.61" y2="113.93" stroke="#ff3700" stroke-width="1.15"/>
<line x1="156.61" y1="113.93" x2="150.61" y2="113.70" stroke="#ff3c00" stroke-width="1.15"/>
<line x1="150.61" y1="113.70" x2="144.93" y2="113.52" stroke="#ff4100" stroke-width="1.15"/>
<line x1="144.93" y1="113.52" x2="139.61" y2="113.40" stroke="#ff4600" stroke-width="1.15"/>
<line x1="139.61" y1="113.40" x2="134.67" y2="113.35" stroke="#ff4c00" stroke-width="1.15"/>
<line x1="134.67" y1="113.35" x2="130.12" y2="113.38" stroke="#ff5100" stroke-width="1.15"/>
<line x1="130.12" y1="113.38" x2="126.00" y2="113.49" stroke="#ff5700" stroke-width="1.15"/>
<line x1="126.00" y1="113.49" x2="122.31" y2="113.69" stroke="#ff5d00" stroke-width="1.15"/>
<line x1="122.31" y1="113.69" x2="119.07" y2="113.98" stroke="#ff6400" stroke-width="1.15"/>
<line x1="119.07" y1="113.98" x2="116.28" y2="114.37" stroke="#ff6a00" stroke-width="1.15"/>
<line x1="116.28" y1="114.37" x2="113.96" y2="114.86" stroke="#ff7100" stroke-width="1.15"/>
<line x1="113.96" y1="114.86" x2="112.12" y2="115.46" stroke="#ff7800" stroke-width="1.15"/>
<line x1="112.12" y1="115.46" x2="110.76" y2="116.17" stroke="#ff7f00" stroke-width="1.15"/>
<line x1="110.76" y1="116.17" x2="109.88" y2="117.00" stroke="#ff8600" stroke-width="1.15"/>
<line x1="109.88" y1="117.00" x2="109.48" y2="117.93" stroke="#ff8d00" stroke-width="1.15"/>
<line x1="109.48" y1="117.93" x2="109.57" y2="118.98" stroke="#ff9400" stroke-width="1.15"/>
<line x1="109.57" y1="118.98" x2="110.14" y2="120.15" stroke="#ff9c00" stroke-width="1.15"/>
<line x1="110.14" y1="120.15" x2="111.19" y2="121.43" stroke="#ffa400" stroke-width="1.15"/>
<line x1="111.19" y1="121.43" x2="112.72" y2="122.83" stroke="#ffac00" stroke-width="1.15"/>
<line x1="112.72" y1="122.83" x2="114.72" y2="124.34" stroke="#ffb400" stroke-width="1.15"/>
<line x1="114.72" y1="124.34" x2="117.17" y2="125.96" stroke="#ffbc00" stroke-width="1.15"/>
<line x1="117.17" y1="125.96" x2="120.07" y2="127.68" stroke="#ffc500" stroke-width="1.15"/>
<line x1="120.07" y1="127.68" x2="123.42" y2="129.51" stroke="#ffcd00" stroke-width="1.15"/>
<line x1="123.42" y1="129.51" x2="127.18" y2="131.44" stroke="#ffd600" stroke-width="1.15"/>
<line x1="127.18" y1="131.44" x2="131.36" y2="133.46" stroke="#ffdf00" stroke-width="1.15"/>
<line x1="131.36" y1="133.46" x2="135.92" y2="135.57" stroke="#ffe700" stroke-width="1.15"/>
<line x1="135.92" y1="135.57" x2="140.85" y2="137.76" stroke="#fff000" stroke-width="1.15"/>
<line x1="140.85" y1="137.76" x2="146.13" y2="140.02" stroke="#fffa00" stroke-width="1.15"/>
<circle cx="283.23" cy="182.79" r="1.55" fill="#00ff00"/>
<circle cx="284.54" cy="182.62" r="1.55" fill="#00ff0b"/>
<circle cx="285.36" cy="182.27" r="1.55" fill="#00ff15"/>
<circle cx="285.69" cy="181.75" r="1.55" fill="#00ff20"/>
<circle cx="285.55" cy="181.08" r="1.55" fill="#00ff2b"/>
<circle cx="284.96" cy="180.26" r="1.55" fill="#00ff35"/>
<circle cx="283.95" cy="179.31" r="1.55" fill="#00ff40"/>
<circle cx="282.55" cy="178.24" r="1.55" fill="#00ff4b"/>
<circle cx="280.79" cy="177.06" r="1.55" fill="#00ff55"/>
<circle cx="278.69" cy="175.79" r="1.55" fill="#00ff60"/>
<circle cx="276.30" cy="174.45" r="1.55" fill="#00ff6a"/>
<circle cx="273.65" cy="173.04" r="1.55" fill="#00ff75"/>
<circle cx="270.78" cy="171.59" r="1.55" fill="#00ff7f"/>
<circle cx="267.72" cy="170.11" r="1.55" fill="#00ff8a"/>
<circle cx="264.51" cy="168.61" r="1.55" fill="#00ff94"/>
<circle cx="261.19" cy="167.11" r="1.55" fill="#00ff9e"/>
<circle cx="257.78" cy="165.62" r="1.55" fill="#00ffa8"/>
<circle cx="254.32" cy="164.15" r="1.55" fill="#00ffb2"/>
<circle cx="250.84" cy="162.72" r="1.55" fill="#00ffbc"/>
<circle cx="247.38" cy="161.33" r="1.55" fill="#00ffc6"/>
<circle cx="243.95" cy="160.00" r="1.55" fill="#00ffd0"/>
<circle cx="240.59" cy="158.74" r="1.55" fill="#00ffda"/>
<circle cx="237.31" cy="157.55" r="1.55" fill="#00ffe3"/>
<circle cx="234.15" cy="156.45" r="1.55" fill="#00ffed"/>
<circle cx="231.12" cy="155.44" r="1.55" fill="#00fff6"/>
<circle cx="228.24" cy="154.53" r="1.55" fill="#00feff"/>
<circle cx="225.53" cy="153.72" r="1.55" fill="#00f5ff"/>
<circle cx="223.00" cy="153.02" r="1.55" fill="#00ecff"/>
<circle cx="220.66" cy="152.44" r="1.55" fill="#00e3ff"/>
<circle cx="218.53" cy="151.97" r="1.55" fill="#00daff"/>
<circle cx="216.62" cy="151.64" r="1.55" fill="#00d1ff"/>
<circle cx="214.94" cy="151.43" r="1.55" fill="#00c9ff"/>
<circle cx="213.49" cy="151.35" r="1.55" fill="#00c0ff"/>
<circle cx="212.28" cy="151.40" r="1.55" fill="#00b8ff"/>
<circle cx="211.31" cy="151.60" r="1.55" fill="#00b0ff"/>
<circle cx="210.60" cy="151.93" r="1.55" fill="#00a8ff"/>
<circle cx="210.13" cy="152.40" r="1.55" fill="#00a0ff"/>
<circle cx="209.92" cy="153.01" r="1.55" fill="#0098ff"/>
<circle cx="209.96" cy="153.76" r="1.55" fill="#0091ff"/>
<circle cx="210.25" cy="154.66" r="1.55" fill="#0089ff"/>
<circle cx="210.80" cy="155.71" r="1.55" fill="#0082ff"/>
<circle cx="211.59" cy="156.89" r="1.55" fill="#007bff"/>
<circle cx="212.62" cy="158.22" r="1.55" fill="#0074ff"/>
<circle cx="213.89" cy="159.69" r="1.55" fill="#006dff"/>
<circle cx="215.40" cy="161.30" r="1.55" fill="#0067ff"/>
<circle cx="217.12" cy="163.05" r="1.55" fill="#0060ff"/>
<circle cx="219.06" cy="164.94" r="1.55" fill="#005aff"/>
<circle cx="221.20" cy="166.97" r="1.55" fill="#0054ff"/>
<circle cx="223.54" cy="169.12" r="1.55" fill="#004eff"/>
<circle cx="226.05" cy="171.40" r="1.55" fill="#0049ff"/>
<circle cx="228.72" cy="173.80" r="1.55" fill="#0043ff"/>
<circle cx="231.54" cy="176.32" r="1.55" fill="#003eff"/>
<circle cx="234.49" cy="178.95" r="1.55" fill="#0039ff"/>
<circle cx="237.55" cy="181.69" r="1.55" fill="#0034ff"/>
<circle cx="240.69" cy="184.52" r="1.55" fill="#0030ff"/>
<circle cx="243.90" cy="187.44" r="1.55" fill="#002bff"/>
<circle cx="247.15" cy="190.43" r="1.55" fill="#0027ff"/>
<circle cx="250.41" cy="193.49" r="1.55" fill="#0023ff"/>
<circle cx="253.66" cy="196.61" r="1.55" fill="#001fff"/>
<circle cx="256.87" cy="199.77" r="1.55" fill="#001cff"/>
<circle cx="260.01" cy="202.96" r="1.55" fill="#0018ff"/>
<circle cx="263.04" cy="206.16" r="1.55" fill="#0015ff"/>
<circle cx="265.94" cy="209.37" r="1.55" fill="#0012ff"/>
<circle cx="268.67" cy="212.56" r="1.55" fill="#000fff"/>
<circle cx="271.20" cy="215.71" r="1.55" fill="#000dff"/>
<circle cx="273.50" cy="218.81" r="1.55" fill="#000bff"/>
<circle cx="275.53" cy="221.85" r="1.55" fill="#0009ff"/>
<circle cx="277.27" cy="224.80" r="1.55" fill="#0007ff"/>
<circle cx="278.68" cy="227.65" r="1.55" fill="#0005ff"/>
<circle cx="279.75" cy="230.38" r="1.55" fill="#0004ff"/>
<circle cx="280.43" cy="232.97" r="1.55" fill="#0003ff"/>
<circle cx="280.72" cy="235.41" r="1.55" fill="#0002ff"/>
<circle cx="280.59" cy="237.68" r="1.55" fill="#0001ff"/>
<circle cx="280.03" cy="239.76" r="1.55" fill="#0000ff"/>
<circle cx="279.02" cy="241.65" r="1.55" fill="#0000ff"/>
<circle cx="277.56" cy="243.33" r="1.55" fill="#0000ff"/>
<circle cx="275.65" cy="244.80" r="1.55" fill="#0000ff"/>
<circle cx="273.29" cy="246.04" r="1.55" fill="#0001ff"/>
<circle cx="270.48" cy="247.06" r="1.55" fill="#0001ff"/>
<circle cx="267.24" cy="247.84" r="1.55" fill="#0002ff"/>
<circle cx="263.59" cy="248.39" r="1.55" fill="#0003ff"/>
<circle cx="259.54" cy="248.72" r="1.55" fill="#0004ff"/>
<circle cx="255.12" cy="248.81" r="1.55" fill="#0006ff"/>
<circle cx="250.36" cy="248.69" r="1.55" fill="#0008ff"/>
<circle cx="245.29" cy="248.35" r="1.55" fill="#000aff"/>
<circle cx="239.95" cy="247.81" r="1.55" fill="#000cff"/>
<circle cx="234.37" cy="247.07" r="1.55" fill="#000eff"/>
<circle cx="228.59" cy="246.16" r="1.55" fill="#0011ff"/>
<circle cx="222.65" cy="245.09" r="1.55" fill="#0014ff"/>
<circle cx="216.59" cy="243.86" r="1.55" fill="#0017ff"/>
<circle cx="210.45" cy="242.50" r="1.55" fill="#001aff"/>
<circle cx="204.28" cy="241.03" r="1.55" fill="#001dff"/>
<circle cx="198.10" cy="239.45" r="1.55" fill="#0021ff"/>
<circle cx="191.97" cy="237.79" r="1.55" fill="#0025ff"/>
<circle cx="185.93" cy="236.07" r="1.55" fill="#0029ff"/>
<circle cx="179.99" cy="234.29" r="1.55" fill="#002dff"/>
<circle cx="174.21" cy="232.48" r="1.55" fill="#0032ff"/>
<circle cx="168.61" cy="230.65" r="1.55" fill="#0037ff"/>
<circle cx="163.22" cy="228.81" r="1.55" fill="#003cff"/>
<circle cx="158.07" cy="226.98" r="1.55" fill="#0041ff"/>
<circle cx="153.19" cy="225.17" r="1.55" fill="#0046ff"/>
<circle cx="148.60" cy="223.40" r="1.55" fill="#004cff"/>
<circle cx="144.33" cy="221.67" r="1.55" fill="#0051ff"/>
<circle cx="140.38" cy="220.00" r="1.55" fill="#0057ff"/>
<circle cx="136.79" cy="218.39" r="1.55" fill="#005dff"/>
<circle cx="133.56" cy="216.85" r="1.55" fill="#0064ff"/>
<circle cx="130.71" cy="215.39" r="1.55" fill="#006aff"/>
<circle cx="128.25" cy="214.01" r="1.55" fill="#0071ff"/>
<circle cx="126.19" cy="212.72" r="1.55" fill="#0078ff"/>
<circle cx="124.54" cy="211.53" r="1.55" fill="#007eff"/>
<circle cx="123.31" cy="210.43" r="1.55" fill="#0086ff"/>
<circle cx="122.50" cy="209.43" r="1.55" fill="#008dff"/>
<circle cx="122.11" cy="208.53" r="1.55" fill="#0094ff"/>
<circle cx="122.16" cy="207.74" r="1.55" fill="#009cff"/>
<circle cx="122.63" cy="207.04" r="1.55" fill="#00a4ff"/>
<circle cx="123.53" cy="206.43" r="1.55" fill="#00acff"/>
<circle cx="124.86" cy="205.93" r="1.55" fill="#00b4ff"/>
<circle cx="126.61" cy="205.51" r="1.55" fill="#00bcff"/>
<circle cx="128.77" cy="205.19" r="1.55" fill="#00c5ff"/>
<circle cx="131.35" cy="204.94" r="1.55" fill="#00cdff"/>
<circle cx="134.33" cy="204.78" r="1.55" fill="#00d6ff"/>
<circle cx="137.70" cy="204.68" r="1.55" fill="#00deff"/>
<circle cx="141.45" cy="204.65" r="1.55" fill="#00e7ff"/>
<circle cx="145.56" cy="204.66" r="1.55" fill="#00f0ff"/>
<circle cx="150.02" cy="204.73" r="1.55" fill="#00faff"/>
<circle cx="154.81" cy="204.82" r="1.55" fill="#00fffb"/>
<circle cx="159.90" cy="204.94" r="1.55" fill="#00fff2"/>
<circle cx="165.28" cy="205.07" r="1.55" fill="#00ffe8"/>
<circle cx="170.91" cy="205.20" r="1.55" fill="#00ffdf"/>
<circle cx="176.77" cy="205.31" r="1.55" fill="#00ffd5"/>
<circle cx="182.82" cy="205.39" r="1.55" fill="#00ffcb"/>
<circle cx="189.04" cy="205.43" r="1.55" fill="#00ffc1"/>
<circle cx="195.38" cy="205.41" r="1.55" fill="#00ffb7"/>
<circle cx="201.81" cy="205.32" r="1.55" fill="#00ffad"/>
<circle cx="208.29" cy="205.14" r="1.55" fill="#00ffa3"/>
<circle cx="214.77" cy="204.86" r="1.55" fill="#00ff99"/>
<circle cx="221.21" cy="204.46" r="1.55" fill="#00ff8f"/>
<circle cx="227.57" cy="203.94" r="1.55" fill="#00ff84"/>
<circle cx="233.80" cy="203.26" r="1.55" fill="#00ff7a"/>
<circle cx="239.85" cy="202.44" r="1.55" fill="#00ff70"/>
<circle cx="245.69" cy="201.45" r="1.55" fill="#00ff65"/>
<circle cx="251.27" cy="200.28" r="1.55" fill="#00ff5b"/>
<circle cx="256.54" cy="198.94" r="1.55" fill="#00ff50"/>
<circle cx="261.48" cy="197.40" r="1.55" fill="#00ff45"/>
<circle cx="266.04" cy="195.68" r="1.55" fill="#00ff3b"/>
<circle cx="270.19" cy="193.76" r="1.55" fill="#00ff30"/>
<circle cx="273.91" cy="191.64" r="1.55" fill="#00ff25"/>
<circle cx="277.18" cy="189.34" r="1.55" fill="#00ff1b"/>
<circle cx="279.96" cy="186.85" r="1.55" fill="#00ff10"/>
<circle cx="282.27" cy="184.19" r="1.55" fill="#00ff05"/>
<circle cx="284.07" cy="181.35" r="1.55" fill="#05ff00"/>
<circle cx="285.38" cy="178.35" r="1.55" fill="#10ff00"/>
<circle cx="286.20" cy="175.21" r="1.55" fill="#1bff00"/>
<circle cx="286.54" cy="171.93" r="1.55" fill="#25ff00"/>
<circle cx="286.40" cy="168.53" r="1.55" fill="#30ff00"/>
<circle cx="285.82" cy="165.03" r="1.55" fill="#3bff00"/>
<circle cx="284.81" cy="161.43" r="1.55" fill="#45ff00"/>
<circle cx="283.40" cy="157.77" r="1.55" fill="#50ff00"/>
<circle cx="281.61" cy="154.06" r="1.55" fill="#5bff00"/>
<circle cx="279.49" cy="150.30" r="1.55" fill="#65ff00"/>
<circle cx="277.05" cy="146.53" r="1.55" fill="#70ff00"/>
<circle cx="274.35" cy="142.75" r="1.55" fill="#7aff00"/>
<circle cx="271.41" cy="138.98" r="1.55" fill="#84ff00"/>
<circle cx="268.27" cy="135.23" r="1.55" fill="#8fff00"/>
<circle cx="264.97" cy="131.53" r="1.55" fill="#99ff00"/>
<circle cx="261.55" cy="127.88" r="1.55" fill="#a3ff00"/>
<circle cx="258.03" cy="124.29" r="1.55" fill="#adff00"/>
<circle cx="254.45" cy="120.78" r="1.55" fill="#b7ff00"/>
<circle cx="250.85" cy="117.36" r="1.55" fill="#c1ff00"/>
<circle cx="247.26" cy="114.03" r="1.55" fill="#cbff00"/>
<circle cx="243.71" cy="110.81" r="1.55" fill="#d5ff00"/>
<circle cx="240.22" cy="107.69" r="1.55" fill="#dfff00"/>
<circle cx="236.82" cy="104.69" r="1.55" fill="#e8ff00"/>
<circle cx="233.53" cy="101.81" r="1.55" fill="#f2ff00"/>
<circle cx="230.38" cy="99.06" r="1.55" fill="#fbff00"/>
<circle cx="227.39" cy="96.44" r="1.55" fill="#fffa00"/>
<circle cx="224.57" cy="93.95" r="1.55" fill="#fff000"/>
<circle cx="221.95" cy="91.60" r="1.55" fill="#ffe700"/>
<circle cx="219.53" cy="89.39" r="1.55" fill="#ffde00"/>
<circle cx="217.34" cy="87.31" r="1.55" fill="#ffd600"/>
<circle cx="215.38" cy="85.38" r="1.55" fill="#ffcd00"/>
<circle cx="213.66" cy="83.58" r="1.55" fill="#ffc500"/>
<circle cx="212.19" cy="81.93" r="1.55" fill="#ffbc00"/>
<circle cx="210.99" cy="80.42" r="1.55" fill="#ffb400"/>
<circle cx="210.05" cy="79.05" r="1.55" fill="#ffac00"/>
<circle cx="209.38" cy="77.82" r="1.55" fill="#ffa400"/>
<circle cx="208.98" cy="76.73" r="1.55" fill="#ff9c00"/>
<circle cx="208.87" cy="75.79" r="1.55" fill="#ff9400"/>
<circle cx="209.03" cy="74.98" r="1.55" fill="#ff8d00"/>
<circle cx="209.47" cy="74.30" r="1.55" fill="#ff8600"/>
<circle cx="210.19" cy="73.77" r="1.55" fill="#ff7e00"/>
<circle cx="211.18" cy="73.36" r="1.55" fill="#ff7800"/>
<circle cx="212.45" cy="73.10" r="1.55" fill="#ff7100"/>
<circle cx="213.99" cy="72.96" r="1.55" fill="#ff6a00"/>
<circle cx="215.78" cy="72.95" r="1.55" fill="#ff6400"/>
<circle cx="217.83" cy="73.08" r="1.55" fill="#ff5d00"/>
<circle cx="220.12" cy="73.32" r="1.55" fill="#ff5700"/>
<circle cx="222.65" cy="73.69" r="1.55" fill="#ff5100"/>
<circle cx="225.39" cy="74.19" r="1.55" fill="#ff4c00"/>
<circle cx="228.35" cy="74.80" r="1.55" fill="#ff4600"/>
<circle cx="231.49" cy="75.52" r="1.55" fill="#ff4100"/>
<circle cx="234.81" cy="76.35" r="1.55" fill="#ff3c00"/>
<circle cx="238.28" cy="77.30" r="1.55" fill="#ff3700"/>
<circle cx="241.88" cy="78.34" r="1.55" fill="#ff3200"/>
<circle cx="245.59" cy="79.48" r="1.55" fill="#ff2d00"/>
<circle cx="249.37" cy="80.72" r="1.55" fill="#ff2900"/>
<circle cx="253.21" cy="82.04" r="1.55" fill="#ff2500"/>
<circle cx="257.07" cy="83.44" r="1.55" fill="#ff2100"/>
<circle cx="260.92" cy="84.91" r="1.55" fill="#ff1d00"/>
<circle cx="264.72" cy="86.44" r="1.55" fill="#ff1a00"/>
<circle cx="268.44" cy="88.04" r="1.55" fill="#ff1700"/>
<circle cx="272.04" cy="89.67" r="1.55" fill="#ff1400"/>
<circle cx="275.47" cy="91.35" r="1.55" fill="#ff1100"/>
<circle cx="278.71" cy="93.05" r="1.55" fill="#ff0e00"/>
<circle cx="281.70" cy="94.77" r="1.55" fill="#ff0c00"/>
<circle cx="284.40" cy="96.50" r="1.55" fill="#ff0a00"/>
<circle cx="286.79" cy="98.21" r="1.55" fill="#ff0800"/>
<circle cx="288.80" cy="99.91" r="1.55" fill="#ff0600"/>
<circle cx="290.42" cy="101.58" r="1.55" fill="#ff0400"/>
<circle cx="291.60" cy="103.21" r="1.55" fill="#ff0300"/>
<circle cx="292.31" cy="104.78" r="1.55" fill="#ff0200"/>
<circle cx="292.53" cy="106.29" r="1.55" fill="#ff0100"/>
<circle cx="292.22" cy="107.73" r="1.55" fill="#ff0100"/>
<circle cx="291.38" cy="109.08" r="1.55" fill="#ff0000"/>
<circle cx="289.98" cy="110.34" r="1.55" fill="#ff0000"/>
<circle cx="288.02" cy="111.50" r="1.55" fill="#ff0000"/>
<circle cx="285.50" cy="112.55" r="1.55" fill="#ff0000"/>
<circle cx="282.43" cy="113.49" r="1.55" fill="#ff0100"/>
<circle cx="278.81" cy="114.32" r="1.55" fill="#ff0200"/>
<circle cx="274.67" cy="115.03" r="1.55" fill="#ff0300"/>
<circle cx="270.03" cy="115.62" r="1.55" fill="#ff0400"/>
<circle cx="264.93" cy="116.10" r="1.55" fill="#ff0500"/>
<circle cx="259.39" cy="116.46" r="1.55" fill="#ff0700"/>
<circle cx="253.45" cy="116.72" r="1.55" fill="#ff0900"/>
<circle cx="247.17" cy="116.88" r="1.55" fill="#ff0b00"/>
<circle cx="240.59" cy="116.94" r="1.55" fill="#ff0d00"/>
<circle cx="233.76" cy="116.91" r="1.55" fill="#ff0f00"/>
<circle cx="226.73" cy="116.81" r="1.55" fill="#ff1200"/>
<circle cx="219.56" cy="116.64" r="1.55" fill="#ff1500"/>
<circle cx="212.29" cy="116.41" r="1.55" fill="#ff1800"/>
<circle cx="204.97" cy="116.14" r="1.55" fill="#ff1c00"/>
<circle cx="197.67" cy="115.83" r="1.55" fill="#ff1f00"/>
<circle cx="190.42" cy="115.51" r="1.55" fill="#ff2300"/>
<circle cx="183.28" cy="115.17" r="1.55" fill="#ff2700"/>
<circle cx="176.29" cy="114.83" r="1.55" fill="#ff2b00"/>
<circle cx="169.49" cy="114.50" r="1.55" fill="#ff3000"/>
<circle cx="162.92" cy="114.20" r="1.55" fill="#ff3400"/>
<circle cx="156.61" cy="113.93" r="1.55" fill="#ff3900"/>
<circle cx="150.61" cy="113.70" r="1.55" fill="#ff3e00"/>
<circle cx="144.93" cy="113.52" r="1.55" fill="#ff4300"/>
<circle cx="139.61" cy="113.40" r="1.55" fill="#ff4900"/>
<circle cx="134.67" cy="113.35" r="1.55" fill="#ff4e00"/>
<circle cx="130.12" cy="113.38" r="1.55" fill="#ff5400"/>
<circle cx="126.00" cy="113.49" r="1.55" fill="#ff5a00"/>
<circle cx="122.31" cy="113.69" r="1.55" fill="#ff6000"/>
<circle cx="119.07" cy="113.98" r="1.55" fill="#ff6700"/>
<circle cx="116.28" cy="114.37" r="1.55" fill="#ff6d00"/>
<circle cx="113.96" cy="114.86" r="1.55" fill="#ff7400"/>
<circle cx="112.12" cy="115.46" r="1.55" fill="#ff7b00"/>
<circle cx="110.76" cy="116.17" r="1.55" fill="#ff8200"/>
<circle cx="109.88" cy="117.00" r="1.55" fill="#ff8900"/>
<circle cx="109.48" cy="117.93" r="1.55" fill="#ff9100"/>
<circle cx="109.57" cy="118.98" r="1.55" fill="#ff9800"/>
<circle cx="110.14" cy="120.15" r="1.55" fill="#ffa000"/>
<circle cx="111.19" cy="121.43" r="1.55" fill="#ffa800"/>
<circle cx="112.72" cy="122.83" r="1.55" fill="#ffb000"/>
<circle cx="114.72" cy="124.34" r="1.55" fill="#ffb800"/>
<circle cx="117.17" cy="125.96" r="1.55" fill="#ffc000"/>
<circle cx="120.07" cy="127.68" r="1.55" fill="#ffc900"/>
<circle cx="123.42" cy="129.51" r="1.55" fill="#ffd100"/>
<circle cx="127.18" cy="131.44" r="1.55" fill="#ffda00"/>
<circle cx="131.36" cy="133.46" r="1.55" fill="#ffe300"/>
<circle cx="135.92" cy="135.57" r="1.55" fill="#ffec00"/>
<circle cx="140.85" cy="137.76" r="1.55" fill="#fff500"/>
<circle cx="146.13" cy="140.02" r="1.55" fill="#fffe00"/>
<line x1="106.45" y1="96.99" x2="239.33" y2="143.36" stroke="#cfcfcf" stroke-width="1.0"/>
<line x1="239.33" y1="143.36" x2="327.53" y2="85.88" stroke="#cfcfcf" stroke-width="1.0"/>
<line x1="239.33" y1="143.36" x2="235.70" y2="286.78" stroke="#cfcfcf" stroke-width="1.0"/>
<line x1="124.36" y1="224.53" x2="235.70" y2="286.78" stroke="#cfcfcf" stroke-width="1.0"/>
<line x1="235.70" y1="286.78" x2="311.49" y2="208.17" stroke="#cfcfcf" stroke-width="1.0"/>
<line x1="106.45" y1="96.99" x2="103.11" y2="92.08" stroke="#cfcfcf" stroke-width="1.0"/>
<line x1="208.62" y1="57.84" x2="210.69" y2="53.76" stroke="#cfcfcf" stroke-width="1.0"/>
<line x1="124.36" y1="224.53" x2="122.03" y2="229.14" stroke="#cfcfcf" stroke-width="1.0"/>
<line x1="235.70" y1="286.78" x2="239.07" y2="291.74" stroke="#cfcfcf" stroke-width="1.0"/>
<line x1="124.36" y1="224.53" x2="119.21" y2="224.98" stroke="#cfcfcf" stroke-width="1.0"/>
<line x1="311.49" y1="208.17" x2="316.08" y2="207.77" stroke="#cfcfcf" stroke-width="1.0"/>
<line x1="136.67" y1="85.41" x2="133.53" y2="80.80" stroke="#cfcfcf" stroke-width="1.0"/>
<line x1="234.82" y1="64.02" x2="236.92" y2="59.77" stroke="#cfcfcf" stroke-width="1.0"/>
<line x1="148.67" y1="238.13" x2="146.29" y2="242.95" stroke="#cfcfcf" stroke-width="1.0"/>
<line x1="258.13" y1="263.51" x2="261.30" y2="268.16" stroke="#cfcfcf" stroke-width="1.0"/>
<line x1="120.43" y1="196.57" x2="115.06" y2="197.00" stroke="#cfcfcf" stroke-width="1.0"/>
<line x1="315.03" y1="181.15" x2="319.80" y2="180.77" stroke="#cfcfcf" stroke-width="1.0"/>
<line x1="163.41" y1="75.16" x2="160.45" y2="70.82" stroke="#cfcfcf" stroke-width="1.0"/>
<line x1="263.17" y1="70.70" x2="265.32" y2="66.27" stroke="#cfcfcf" stroke-width="1.0"/>
<line x1="175.13" y1="252.92" x2="172.68" y2="257.98" stroke="#cfcfcf" stroke-width="1.0"/>
<line x1="277.97" y1="242.93" x2="280.96" y2="247.31" stroke="#cfcfcf" stroke-width="1.0"/>
<line x1="116.17" y1="166.22" x2="110.56" y2="166.62" stroke="#cfcfcf" stroke-width="1.0"/>
<line x1="318.86" y1="151.95" x2="323.81" y2="151.60" stroke="#cfcfcf" stroke-width="1.0"/>
<line x1="187.25" y1="66.03" x2="184.44" y2="61.92" stroke="#cfcfcf" stroke-width="1.0"/>
<line x1="293.97" y1="77.97" x2="296.15" y2="73.33" stroke="#cfcfcf" stroke-width="1.0"/>
<line x1="204.02" y1="269.07" x2="201.51" y2="274.40" stroke="#cfcfcf" stroke-width="1.0"/>
<line x1="295.64" y1="224.60" x2="298.47" y2="228.74" stroke="#cfcfcf" stroke-width="1.0"/>
<line x1="111.53" y1="133.15" x2="105.66" y2="133.51" stroke="#cfcfcf" stroke-width="1.0"/>
<line x1="323.01" y1="120.31" x2="328.17" y2="119.99" stroke="#cfcfcf" stroke-width="1.0"/>
<line x1="208.62" y1="57.84" x2="205.96" y2="53.94" stroke="#cfcfcf" stroke-width="1.0"/>
<line x1="327.53" y1="85.88" x2="329.75" y2="81.02" stroke="#cfcfcf" stroke-width="1.0"/>
<line x1="235.70" y1="286.78" x2="233.13" y2="292.40" stroke="#cfcfcf" stroke-width="1.0"/>
<line x1="311.49" y1="208.17" x2="314.17" y2="212.09" stroke="#cfcfcf" stroke-width="1.0"/>
<line x1="106.45" y1="96.99" x2="100.30" y2="97.30" stroke="#cfcfcf" stroke-width="1.0"/>
<line x1="327.53" y1="85.88" x2="332.90" y2="85.61" stroke="#cfcfcf" stroke-width="1.0"/>
<text x="135.4" y="57.7" text-anchor="middle">Y</text>
<text x="174.1" y="58.1" text-anchor="middle">0.5</text>
<text x="154.9" y="66.4" text-anchor="middle">0</text>
<text x="121.3" y="76.7" text-anchor="middle">-0.5</text>
<text x="90.7" y="87.4" text-anchor="middle">-1.0</text>
<text x="87.0" y="98.8" text-anchor="middle">1.0</text>
<text x="195.9" y="50.7" text-anchor="middle">1.0</text>
<text x="221.9" y="50.7" text-anchor="middle">-1.0</text>
<text x="246.9" y="56.6" text-anchor="middle">-0.5</text>
<text x="281.7" y="62.8" text-anchor="middle">2.76E-5</text>
<text x="301.8" y="53.3" text-anchor="middle">X</text>
<text x="304.7" y="69.4" text-anchor="middle">0.5</text>
<text x="339.1" y="77.7" text-anchor="middle">1.0</text>
<text x="345.6" y="86.7" text-anchor="middle">1.0</text>
<text x="339.9" y="121.8" text-anchor="middle">0.5</text>
<text x="331.2" y="152.4" text-anchor="middle">0</text>
<text x="351.8" y="152.4" text-anchor="middle">Z</text>
<text x="333.9" y="181.8" text-anchor="middle">-0.5</text>
<text x="329.8" y="209.1" text-anchor="middle">-1.0</text>
<text x="323.6" y="218.7" text-anchor="middle">1.0</text>
<text x="308.2" y="235.4" text-anchor="middle">0.5</text>
<text x="92.4" y="135.8" text-anchor="middle">0.5</text>
<text x="80.7" y="168.2" text-anchor="middle">Z</text>
<text x="101.9" y="167.6" text-anchor="middle">0</text>
<text x="100.7" y="198.7" text-anchor="middle">-0.5</text>
<text x="105.3" y="226.2" text-anchor="middle">-1.0</text>
<text x="111.2" y="235.2" text-anchor="middle">-1.0</text>
<text x="135.7" y="250.3" text-anchor="middle">-0.5</text>
<text x="154.8" y="266.0" text-anchor="middle">2.76E-5</text>
<text x="136.0" y="275.4" text-anchor="middle">X</text>
<text x="192.5" y="283.3" text-anchor="middle">0.5</text>
<text x="223.9" y="300.9" text-anchor="middle">1.0</text>
<text x="252.2" y="300.9" text-anchor="middle">-1.0</text>
<text x="273.6" y="275.8" text-anchor="middle">-0.5</text>
<text x="305.6" y="263.8" text-anchor="middle">Y</text>
<text x="285.9" y="255.0" text-anchor="middle">0</text>
<text x="39.1" y="20.4" text-anchor="middle">1.0</text>
<text x="41.2" y="206.2" text-anchor="middle">-1.0</text>
</svg>

<!-- BOTTOM WINDOW -->
<div class="win" style="left:232px;top:415px;width:388px;height:101px;border-color:#7479d6">
  <div class="title" style="height:23px"></div>
</div>
<svg class="abs" style="left:239px;top:421px" width="13" height="12" viewBox="0 0 13 12">
  <rect x=".5" y=".5" width="12" height="11" rx="1.5" fill="#f3f5f8" stroke="#9aa5b0"/>
  <path d="M6.6 2.3c1.3 1 1.2 2.4.1 3.6c-1.1-.9-1-2.3-.1-3.6z" fill="#f39a3a"/>
  <path d="M3.6 6.3h5.8l-.9 2.4H4.5z" fill="#a9bdd2"/>
  <path d="M2.8 9.5h7.4" stroke="#7a8898" stroke-width="1"/>
</svg>
<div class="abs" style="left:524px;top:426px;width:8px;height:1px;background:#111"></div>
<div class="abs" style="left:560px;top:423px;width:8px;height:8px;border:1px solid #111"></div>
<svg class="abs" style="left:596px;top:423px" width="9" height="9" viewBox="0 0 9 9"><path d="M.5 .5L8.5 8.5M8.5 .5L.5 8.5" stroke="#111" stroke-width="1"/></svg>

<div class="abs" style="left:239px;top:445px;width:62px;height:62px;border:1px solid #97a5b6;background:linear-gradient(#dae5f1 0%,#fdfeff 30%,#f1f5fa 42%,#d3e0ef 72%,#bfd2e8 100%)"></div>
<div class="abs" style="left:256px;top:469px;width:28px;height:15px;border:1px solid #b7c6d8"></div>
<div class="abs" style="left:257px;top:471.5px;width:27px;text-align:center;font-weight:bold;font-size:10px;color:#111;line-height:1">PLAY</div>

<div class="abs" style="left:308px;top:442.5px;font-weight:bold;font-size:7.6px;letter-spacing:-.2px;color:#222;line-height:1;white-space:nowrap">count = 274</div>
<div class="abs" style="left:320px;top:451px;width:297px;height:13px;background:#0000f8">
  <div class="abs" style="left:0;top:0;width:10px;height:13px;background:#fff;border:1px solid #a4acba"></div>
  <svg class="abs" style="left:3px;top:4px" width="4" height="6" viewBox="0 0 4 6"><path d="M3.5 0V6L0 3z" fill="#111"/></svg>
  <div class="abs" style="left:287px;top:0;width:10px;height:13px;background:#fff;border:1px solid #a4acba"></div>
  <svg class="abs" style="left:291px;top:4px" width="4" height="6" viewBox="0 0 4 6"><path d="M.5 0V6L4 3z" fill="#111"/></svg>
  <div class="abs" style="left:255px;top:0;width:11px;height:13px;background:linear-gradient(90deg,#f6f9fc,#e3ebf4 60%,#d2deee);border:1px solid #7d97d2"></div>
  <div class="abs" style="left:258px;top:2px;width:4px;height:9px;background:#c9d4e8;border-left:1px solid #8a9fd0;border-right:1px solid #8a9fd0"></div>
</div>

<div class="abs" style="left:308px;top:476.8px;font-weight:bold;font-size:7.5px;letter-spacing:-.5px;color:#222;line-height:1;white-space:nowrap">SPEED:</div>
<div class="abs" style="left:357px;top:476px;width:124px;height:9px;background:#0000f8">
  <div class="abs" style="left:0;top:0;width:10px;height:9px;background:#fff;border:1px solid #a4acba"></div>
  <svg class="abs" style="left:3.5px;top:2px" width="3" height="5" viewBox="0 0 3 5"><path d="M2.5 0V5L0 2.5z" fill="#111"/></svg>
  <div class="abs" style="left:114px;top:0;width:10px;height:9px;background:#fff;border:1px solid #a4acba"></div>
  <svg class="abs" style="left:118px;top:2px" width="3" height="5" viewBox="0 0 3 5"><path d="M.5 0V5L3 2.5z" fill="#111"/></svg>
  <div class="abs" style="left:12px;top:0;width:11px;height:9px;background:linear-gradient(90deg,#f6f9fc,#e3ebf4 60%,#d2deee);border:1px solid #7d97d2"></div>
  <div class="abs" style="left:15px;top:2px;width:4px;height:5px;background:#d0daea;border-left:1px solid #8a9fd0;border-right:1px solid #8a9fd0"></div>
</div>

<div class="abs" style="left:308px;top:495.6px;font-weight:bold;font-size:7.5px;letter-spacing:-.4px;color:#222;line-height:1;white-space:nowrap">MODE:</div>
<div class="abs" style="left:357px;top:494px;width:124px;height:14px;background:#fff;border:1px solid #8a8a8a;border-right-color:#9a9a9a;border-bottom-color:#a8a8a8">
  <span class="abs" style="left:2px;top:3px;font-size:8px;letter-spacing:-.55px;color:#222;line-height:1;white-space:nowrap">TRACE</span>
  <svg class="abs" style="left:114px;top:5px" width="7" height="4" viewBox="0 0 7 4"><path d="M.5 .5L3.5 3.5L6.5 .5" stroke="#555" fill="none" stroke-width=".8"/></svg>
</div>
</body></html>
